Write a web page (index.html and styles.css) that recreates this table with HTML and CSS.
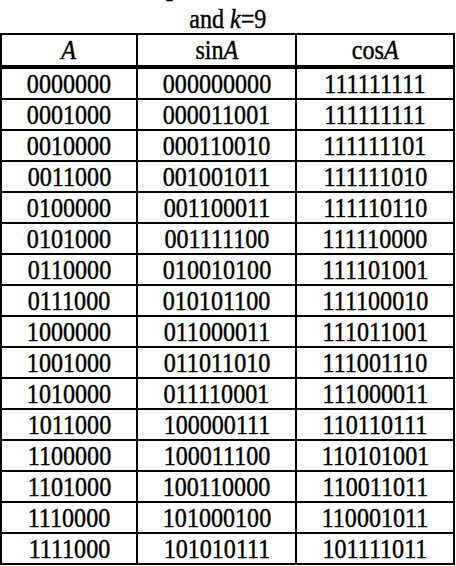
FILE: index.html
```html
<!DOCTYPE html>
<html lang="en">
<head>
<meta charset="utf-8">
<title>Table: sin and cos values, k=9</title>
<link rel="stylesheet" href="styles.css">
</head>
<body>
<div class="prev"><div class="prev-line"><span>p</span><span class="prev-end">,</span></div></div>
<div class="caption"><span class="v">and <i>k</i>=9</span></div>
<div class="tbl">
  <div class="cell head"><span class="v"><i>A</i></span></div>
  <div class="cell head"><span class="v">sin<i>A</i></span></div>
  <div class="cell head"><span class="v">cos<i>A</i></span></div>

  <div class="cell"><span class="v">0000000</span></div><div class="cell"><span class="v">000000000</span></div><div class="cell"><span class="v">111111111</span></div>
  <div class="cell"><span class="v">0001000</span></div><div class="cell"><span class="v">000011001</span></div><div class="cell"><span class="v">111111111</span></div>
  <div class="cell"><span class="v">0010000</span></div><div class="cell"><span class="v">000110010</span></div><div class="cell"><span class="v">111111101</span></div>
  <div class="cell"><span class="v">0011000</span></div><div class="cell"><span class="v">001001011</span></div><div class="cell"><span class="v">111111010</span></div>
  <div class="cell"><span class="v">0100000</span></div><div class="cell"><span class="v">001100011</span></div><div class="cell"><span class="v">111110110</span></div>
  <div class="cell"><span class="v">0101000</span></div><div class="cell"><span class="v">001111100</span></div><div class="cell"><span class="v">111110000</span></div>
  <div class="cell"><span class="v">0110000</span></div><div class="cell"><span class="v">010010100</span></div><div class="cell"><span class="v">111101001</span></div>
  <div class="cell"><span class="v">0111000</span></div><div class="cell"><span class="v">010101100</span></div><div class="cell"><span class="v">111100010</span></div>
  <div class="cell"><span class="v">1000000</span></div><div class="cell"><span class="v">011000011</span></div><div class="cell"><span class="v">111011001</span></div>
  <div class="cell"><span class="v">1001000</span></div><div class="cell"><span class="v">011011010</span></div><div class="cell"><span class="v">111001110</span></div>
  <div class="cell"><span class="v">1010000</span></div><div class="cell"><span class="v">011110001</span></div><div class="cell"><span class="v">111000011</span></div>
  <div class="cell"><span class="v">1011000</span></div><div class="cell"><span class="v">100000111</span></div><div class="cell"><span class="v">110110111</span></div>
  <div class="cell"><span class="v">1100000</span></div><div class="cell"><span class="v">100011100</span></div><div class="cell"><span class="v">110101001</span></div>
  <div class="cell"><span class="v">1101000</span></div><div class="cell"><span class="v">100110000</span></div><div class="cell"><span class="v">110011011</span></div>
  <div class="cell"><span class="v">1110000</span></div><div class="cell"><span class="v">101000100</span></div><div class="cell"><span class="v">110001011</span></div>
  <div class="cell"><span class="v">1111000</span></div><div class="cell"><span class="v">101010111</span></div><div class="cell"><span class="v">101111011</span></div>
</div>
</body>
</html>
```

FILE: styles.css
```css
html, body {
  margin: 0;
  padding: 0;
  background: #ffffff;
}

body {
  width: 456px;
  font-family: "Liberation Serif", "Times New Roman", serif;
  font-size: 28px;
  color: #000000;
  -webkit-text-stroke: 0.45px #000000;
}

.v {
  display: inline-block;
  transform: scaleX(0.86);
  transform-origin: center;
}

.prev {
  height: 8px;
  overflow: hidden;
}

.prev-line {
  display: flex;
  line-height: 28px;
  margin-top: -28px;
  padding-left: 166px;
  padding-right: 3px;
}

.prev-end {
  margin-left: auto;
}

.caption {
  text-align: center;
  line-height: 21px;
  height: 21px;
}

.tbl {
  margin-top: 4px;
  width: 455px;
  box-sizing: border-box;
  border: 2px solid #000;
  background: #000;
  display: grid;
  grid-template-columns: 134px 157px 156px;
  grid-template-rows: 32px repeat(16, 29px);
  gap: 2px;
}

.cell {
  background: #fff;
  text-align: center;
  line-height: 29px;
  white-space: nowrap;
}

.head {
  box-sizing: border-box;
  border-bottom: 2px solid #000;
  line-height: 30px;
}
```
